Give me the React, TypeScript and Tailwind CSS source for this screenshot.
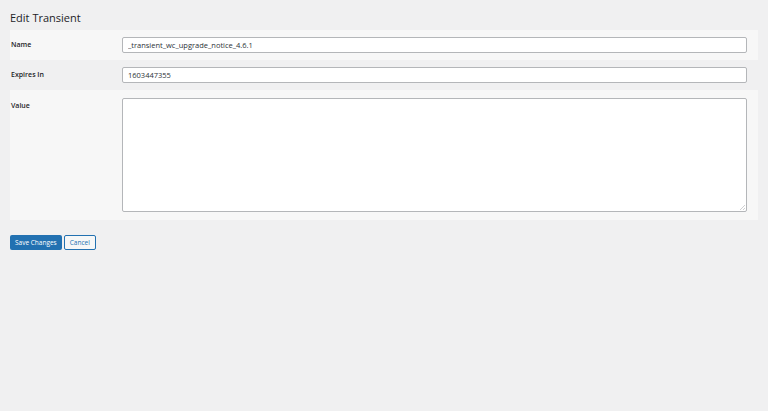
export default function App() {
  return (
    <div className="min-h-[411px] w-full bg-[#f0f0f1] px-[10px] pt-[10px] font-['Open_Sans','Noto_Sans',sans-serif] text-[#1d2327]">
      <h1 className="text-[11px] leading-[15px] font-normal">Edit Transient</h1>

      <div className="mt-[5px] w-[748px]">
        {/* Name */}
        <div className="flex h-[30px] items-center bg-[#f7f7f7]">
          <div className="w-[112px] pl-[1px] text-[7px] font-semibold">Name</div>
          <input
            readOnly
            value="_transient_wc_upgrade_notice_4.6.1"
            className="h-[16px] w-[625px] rounded-[2px] border border-[#b4b6b9] bg-white px-[5px] text-[7.5px] text-[#2c3338] outline-none"
          />
        </div>

        {/* Expires In */}
        <div className="flex h-[30px] items-center">
          <div className="w-[112px] pl-[1px] text-[7px] font-semibold">Expires In</div>
          <input
            readOnly
            value="1603447355"
            className="h-[16px] w-[625px] rounded-[2px] border border-[#b4b6b9] bg-white px-[5px] text-[7.5px] text-[#2c3338] outline-none"
          />
        </div>

        {/* Value */}
        <div className="flex h-[130px] items-start bg-[#f7f7f7] pt-[8px]">
          <div className="w-[112px] pl-[1px] pt-[3px] text-[7px] font-semibold">Value</div>
          <div className="relative h-[114px] w-[625px] rounded-[2px] border border-[#b4b6b9] bg-white">
            {/* resize grip */}
            <svg className="absolute right-[1px] bottom-[1px]" width="6" height="6" viewBox="0 0 6 6">
              <path d="M6 1 L1 6 M6 4 L4 6" stroke="#c3c4c7" strokeWidth="0.8" />
            </svg>
          </div>
        </div>
      </div>

      <div className="mt-[15px] flex gap-[2px]">
        <button className="h-[15px] rounded-[2px] bg-[#2271b1] px-[5px] text-[6.5px] text-white">
          Save Changes
        </button>
        <button className="h-[15px] rounded-[2px] border border-[#2271b1] bg-[#f6f7f7] px-[5px] text-[6.5px] text-[#2271b1]">
          Cancel
        </button>
      </div>
    </div>
  );
}
